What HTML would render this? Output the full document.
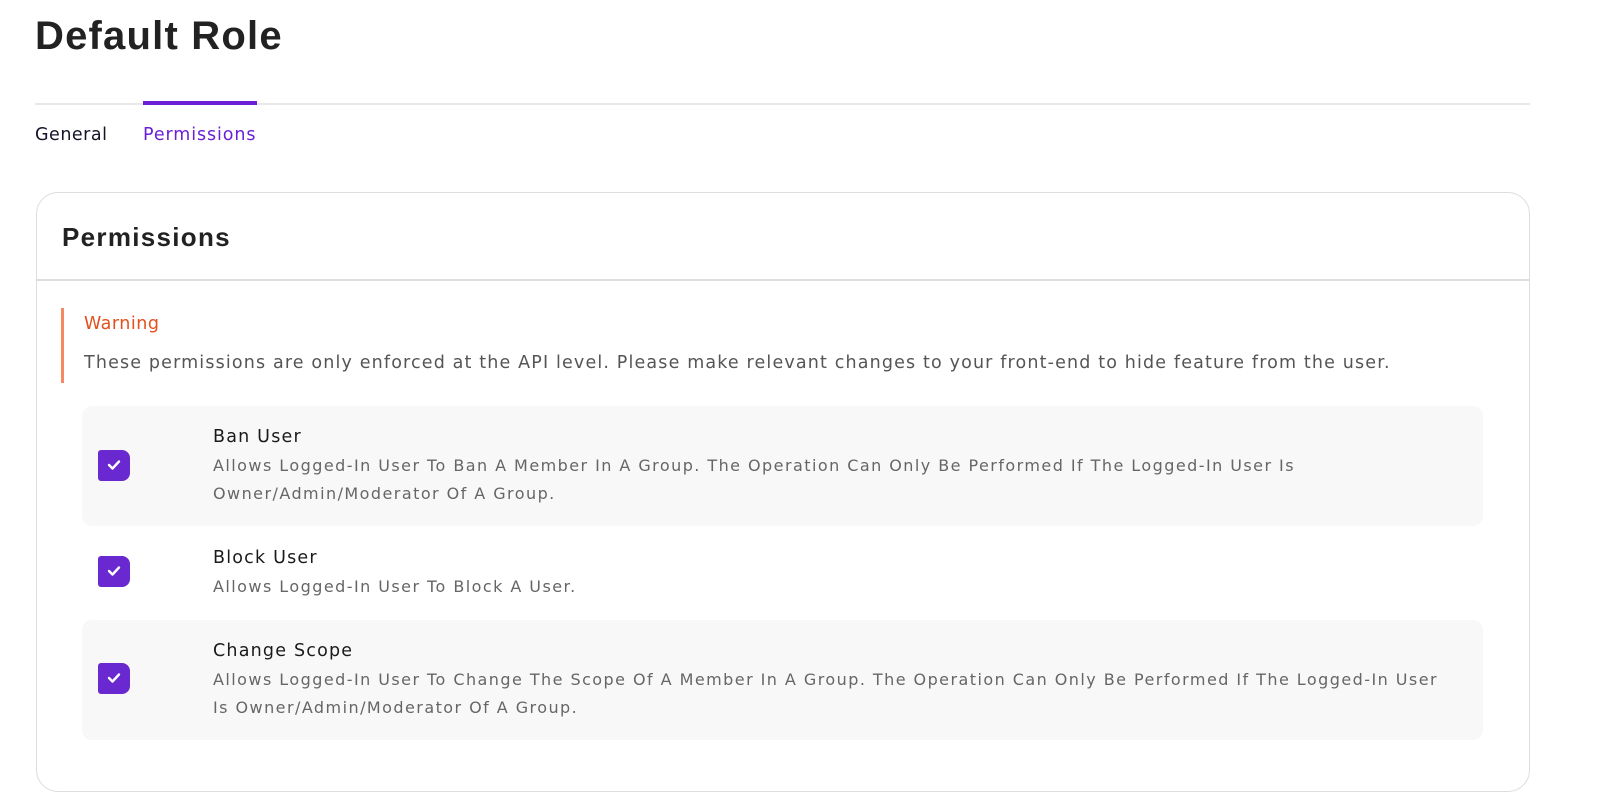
<!DOCTYPE html>
<html><head><style>
*{margin:0;padding:0;box-sizing:border-box}
body{width:1600px;height:768px;overflow:hidden;background:#fff;font-family:"DejaVu Sans","Liberation Sans",sans-serif;position:relative;color:#1a1a1a}
.a{position:absolute;white-space:nowrap}
.cb{position:absolute;left:98px;width:32px;height:31px;background:#6a28d0;border-radius:3px 8px 8px 3px}
.cb svg{position:absolute;left:9px;top:9px}
.row{position:absolute;left:82px;width:1401px;background:#f8f8f8;border-radius:10px}
.t{font-size:17.5px;color:#1a1a1a;left:213px;letter-spacing:1.2px}
.d{font-size:16px;color:#666;left:213px;line-height:28px;letter-spacing:1.45px}
</style></head><body>
<div class="a" style="left:35px;top:14px;font-size:40px;font-weight:bold;color:#222;font-family:'Liberation Sans',sans-serif;letter-spacing:1.2px">Default Role</div>
<div class="a" style="left:35px;top:103px;width:1495px;height:2px;background:#e8e8e8"></div>
<div class="a" style="left:143px;top:101px;width:114px;height:4px;background:#6a1fd6"></div>
<div class="a" style="left:35px;top:125px;font-size:17.5px;color:#141428;letter-spacing:0.5px">General</div>
<div class="a" style="left:143px;top:125px;font-size:17.5px;color:#6a1fd6;letter-spacing:0.9px">Permissions</div>
<div class="a" style="left:36px;top:192px;width:1494px;height:600px;border:1.5px solid #ddd;border-radius:22px"></div>
<div class="a" style="left:37px;top:279px;width:1492px;height:1.5px;background:#ddd"></div>
<div class="a" style="left:62px;top:222px;font-size:26px;font-weight:bold;color:#222;font-family:'Liberation Sans',sans-serif;letter-spacing:1.3px">Permissions</div>
<div class="a" style="left:61px;top:308px;width:3px;height:75px;background:#f48a62"></div>
<div class="a" style="left:84px;top:314px;font-size:17.5px;color:#e4501c;letter-spacing:0.5px">Warning</div>
<div class="a" style="left:84px;top:353px;font-size:17.5px;color:#555;letter-spacing:1.15px">These permissions are only enforced at the API level. Please make relevant changes to your front-end to hide feature from the user.</div>
<div class="row" style="top:406px;height:120px"></div>
<div class="row" style="top:620px;height:120px"></div>
<div class="cb" style="top:450px"><svg width="14" height="12" viewBox="0 0 14 12"><path d="M2 6l3.5 3.5L12 2.5" fill="none" stroke="#fff" stroke-width="2.4" stroke-linecap="round" stroke-linejoin="round"/></svg></div>
<div class="cb" style="top:556px"><svg width="14" height="12" viewBox="0 0 14 12"><path d="M2 6l3.5 3.5L12 2.5" fill="none" stroke="#fff" stroke-width="2.4" stroke-linecap="round" stroke-linejoin="round"/></svg></div>
<div class="cb" style="top:663px"><svg width="14" height="12" viewBox="0 0 14 12"><path d="M2 6l3.5 3.5L12 2.5" fill="none" stroke="#fff" stroke-width="2.4" stroke-linecap="round" stroke-linejoin="round"/></svg></div>
<div class="a t" style="top:427px">Ban User</div>
<div class="a d" style="top:452px">Allows Logged-In User To Ban A Member In A Group. The Operation Can Only Be Performed If The Logged-In User Is<br>Owner/Admin/Moderator Of A Group.</div>
<div class="a t" style="top:548px">Block User</div>
<div class="a d" style="top:573px">Allows Logged-In User To Block A User.</div>
<div class="a t" style="top:641px">Change Scope</div>
<div class="a d" style="top:666px">Allows Logged-In User To Change The Scope Of A Member In A Group. The Operation Can Only Be Performed If The Logged-In User<br>Is Owner/Admin/Moderator Of A Group.</div>
</body></html>
